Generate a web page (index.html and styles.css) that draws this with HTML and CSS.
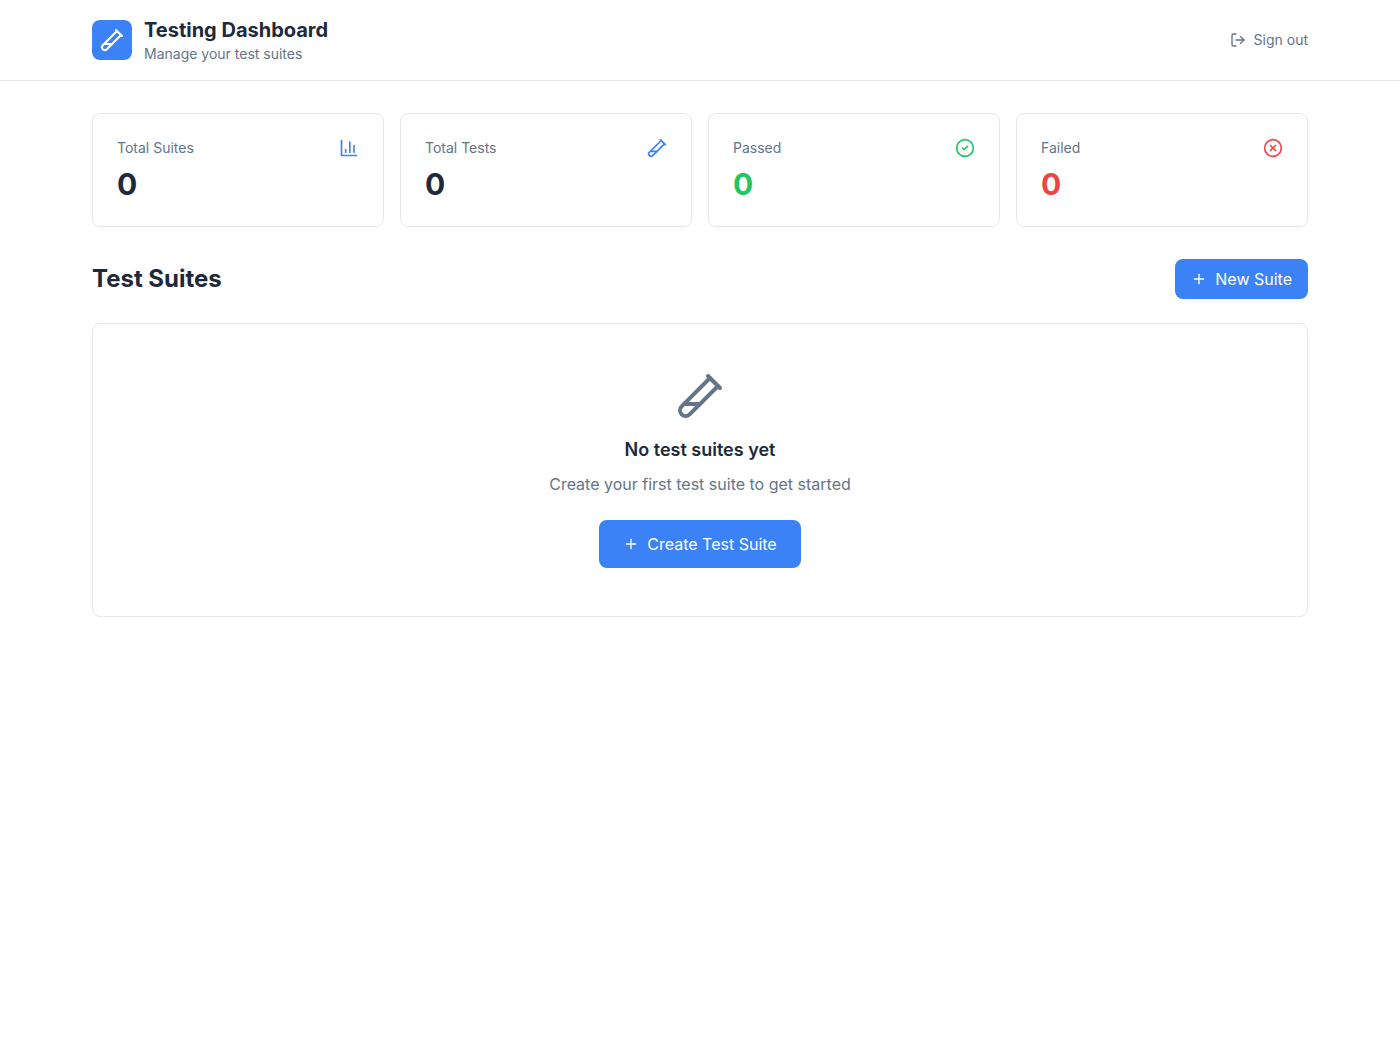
FILE: index.html
```html
<!DOCTYPE html>
<html lang="en">
<head>
    <meta charset="UTF-8">
    <meta name="viewport" content="width=device-width, initial-scale=1.0">
    <title>Testing Dashboard</title>
    <link rel="stylesheet" href="styles.css">
</head>
<body>
    <!-- Shared icons -->
    <svg class="sprite" aria-hidden="true">
        <symbol id="icon-tube" viewBox="0 0 24 24">
            <path d="M21 7 6.82 21.18a2.83 2.83 0 0 1-3.99-.01a2.83 2.83 0 0 1 0-4L17 3"/>
            <path d="m16 2 6 6"/>
            <path d="M12 16H4"/>
        </symbol>
        <symbol id="icon-plus" viewBox="0 0 24 24">
            <path d="M5 12h14"/>
            <path d="M12 5v14"/>
        </symbol>
    </svg>

    <!-- Header -->
    <header class="header">
        <div class="container header-inner">
            <div class="brand">
                <div class="brand-logo">
                    <svg class="icon icon-lg"><use href="#icon-tube"/></svg>
                </div>
                <div>
                    <h1 class="brand-title">Testing Dashboard</h1>
                    <p class="brand-subtitle">Manage your test suites</p>
                </div>
            </div>
            <button class="sign-out" type="button">
                <svg class="icon icon-sm" viewBox="0 0 24 24">
                    <path d="M9 21H5a2 2 0 0 1-2-2V5a2 2 0 0 1 2-2h4"/>
                    <path d="m16 17 5-5-5-5"/>
                    <path d="M21 12H9"/>
                </svg>
                Sign out
            </button>
        </div>
    </header>

    <!-- Main Content -->
    <main class="container main">
        <section class="stats">
            <div class="card stat">
                <div class="stat-head">
                    <span class="stat-label">Total Suites</span>
                    <svg class="icon icon-md blue" viewBox="0 0 24 24">
                        <path d="M3 3v18h18"/>
                        <path d="M18 17V9"/>
                        <path d="M13 17V5"/>
                        <path d="M8 17v-3"/>
                    </svg>
                </div>
                <p class="stat-value">0</p>
            </div>
            <div class="card stat">
                <div class="stat-head">
                    <span class="stat-label">Total Tests</span>
                    <svg class="icon icon-md blue"><use href="#icon-tube"/></svg>
                </div>
                <p class="stat-value">0</p>
            </div>
            <div class="card stat">
                <div class="stat-head">
                    <span class="stat-label">Passed</span>
                    <svg class="icon icon-md green" viewBox="0 0 24 24">
                        <circle cx="12" cy="12" r="10"/>
                        <path d="m9 12 2 2 4-4"/>
                    </svg>
                </div>
                <p class="stat-value green">0</p>
            </div>
            <div class="card stat">
                <div class="stat-head">
                    <span class="stat-label">Failed</span>
                    <svg class="icon icon-md red" viewBox="0 0 24 24">
                        <circle cx="12" cy="12" r="10"/>
                        <path d="m15 9-6 6"/>
                        <path d="m9 9 6 6"/>
                    </svg>
                </div>
                <p class="stat-value red">0</p>
            </div>
        </section>

        <div class="section-head">
            <h2 class="section-title">Test Suites</h2>
            <button class="button" type="button">
                <svg class="icon icon-sm"><use href="#icon-plus"/></svg>
                New Suite
            </button>
        </div>

        <section class="card empty">
            <svg class="icon icon-xl"><use href="#icon-tube"/></svg>
            <h3 class="empty-title">No test suites yet</h3>
            <p class="empty-text">Create your first test suite to get started</p>
            <button class="button button-large" type="button">
                <svg class="icon icon-sm"><use href="#icon-plus"/></svg>
                Create Test Suite
            </button>
        </section>
    </main>
</body>
</html>
```
FILE: styles.css
```css
* {
    box-sizing: border-box;
}
body {
    background-color: #fff;
    color: #1e293b;
    font-family: Inter, "Liberation Sans", sans-serif;
    font-size: 16px;
    line-height: 24px;
    margin: 0;
}
h1, h2, h3, p {
    margin: 0;
}
button {
    font: inherit;
    border: none;
    cursor: pointer;
}
.sprite {
    display: none;
}
.container {
    max-width: 1280px;
    margin: 0 auto;
    padding: 0 32px;
}

/* Icons */
.icon {
    flex-shrink: 0;
    fill: none;
    stroke: currentColor;
    stroke-width: 2;
    stroke-linecap: round;
    stroke-linejoin: round;
}
.icon-sm {
    width: 16px;
    height: 16px;
}
.icon-md {
    width: 20px;
    height: 20px;
}
.icon-lg {
    width: 24px;
    height: 24px;
}
.icon-xl {
    width: 48px;
    height: 48px;
    color: #64748b;
}
.blue {
    color: #3b82f6;
}
.green {
    color: #22c55e;
}
.red {
    color: #ef4444;
}

/* Header */
.header {
    border-bottom: 1px solid #e5e7eb;
}
.header-inner {
    display: flex;
    align-items: center;
    justify-content: space-between;
    padding-top: 16px;
    padding-bottom: 16px;
}
.brand {
    display: flex;
    align-items: center;
    gap: 12px;
}
.brand-logo {
    display: flex;
    align-items: center;
    justify-content: center;
    width: 40px;
    height: 40px;
    border-radius: 8px;
    background-color: #3b82f6;
    color: #fff;
}
.brand-title {
    font-size: 20px;
    line-height: 28px;
    font-weight: 700;
}
.brand-subtitle {
    color: #64748b;
    font-size: 14px;
    line-height: 20px;
}
.sign-out {
    display: flex;
    align-items: center;
    gap: 8px;
    padding: 0;
    background: none;
    color: #64748b;
    font-size: 14px;
    line-height: 20px;
}
.sign-out:hover {
    color: #1e293b;
}

/* Stats */
.main {
    padding-top: 32px;
    padding-bottom: 32px;
}
.card {
    border: 1px solid #e5e7eb;
    border-radius: 8px;
}
.stats {
    display: grid;
    grid-template-columns: repeat(4, 1fr);
    gap: 16px;
    margin-bottom: 32px;
}
.stat {
    padding: 24px;
}
.stat-head {
    display: flex;
    align-items: center;
    justify-content: space-between;
    margin-bottom: 8px;
}
.stat-label {
    color: #64748b;
    font-size: 14px;
    line-height: 20px;
}
.stat-value {
    font-size: 30px;
    line-height: 36px;
    font-weight: 700;
}

/* Test suites */
.section-head {
    display: flex;
    align-items: center;
    justify-content: space-between;
    margin-bottom: 24px;
}
.section-title {
    font-size: 24px;
    line-height: 32px;
    font-weight: 700;
}
.button {
    display: flex;
    align-items: center;
    gap: 8px;
    padding: 8px 16px;
    border-radius: 8px;
    background-color: #3b82f6;
    color: #fff;
}
.button:hover {
    background-color: #2563eb;
}
.button-large {
    padding: 12px 24px;
}
.empty {
    display: flex;
    flex-direction: column;
    align-items: center;
    padding: 48px;
    text-align: center;
}
.empty-title {
    margin-top: 16px;
    font-size: 18px;
    line-height: 28px;
    font-weight: 600;
}
.empty-text {
    margin: 8px 0 24px;
    color: #64748b;
}

@media (max-width: 768px) {
    .stats {
        grid-template-columns: 1fr;
    }
}
```
